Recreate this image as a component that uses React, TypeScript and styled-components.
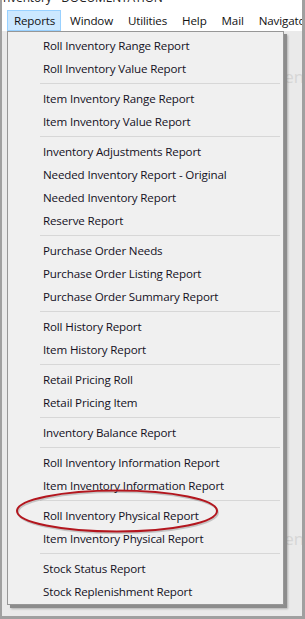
import styled, { createGlobalStyle } from "styled-components";

const GlobalStyle = createGlobalStyle`
  html, body {
    margin: 0;
    padding: 0;
    background: #ffffff;
  }
  body {
    font-family: "Segoe UI", "Open Sans", "Liberation Sans", sans-serif;
    font-size: 11.6px;
    letter-spacing: -0.15px;
    color: #111;
  }
`;

const Frame = styled.div`
  width: 305px;
  height: 619px;
  box-sizing: border-box;
  border: 3px solid #a0a0a0;
  border-top: none;
  border-left-width: 2px;
  display: flex;
  flex-direction: column;
  overflow: hidden;
  background: #ffffff;
`;

const TitleStrip = styled.div`
  height: 10px;
  overflow: hidden;
  white-space: nowrap;
  span {
    display: block;
    margin: -10px 0 0 0;
    padding-left: 1px;
    line-height: 16px;
    font-size: 12px;
    color: #222;
  }
`;

const MenuBar = styled.div`
  height: 21px;
  display: flex;
  align-items: stretch;
  padding-left: 5px;
  background: #ffffff;
  white-space: nowrap;
`;

const MenuTitle = styled.div<{ $open?: boolean }>`
  display: flex;
  align-items: center;
  padding: 0 5px 0 6px;
  margin-right: 2px;
  border: 1px solid ${(p) => (p.$open ? "#99d1ff" : "transparent")};
  background: ${(p) => (p.$open ? "#cce8ff" : "transparent")};
  color: #111;
`;

const Desk = styled.div`
  flex: 1;
  position: relative;
  background: #eaeaea;
  padding: 0 0 0 5px;
`;

const Watermark = styled.span<{ $top: number }>`
  position: absolute;
  right: -2px;
  top: ${(p) => p.$top}px;
  font-size: 17px;
  color: #d6d6d6;
`;

const Dropdown = styled.div`
  position: relative;
  width: 277px;
  box-sizing: border-box;
  background: #f0f0f0;
  border: 1px solid #979797;
  padding: 2px 2px 1px 2px;
  box-shadow: 3px 3px 0 #8c8c8c, 4px 4px 2px rgba(0, 0, 0, 0.25);
`;

const Item = styled.div`
  height: 23px;
  line-height: 23px;
  padding-left: 33px;
  white-space: nowrap;
  color: #14101e;
`;

const Separator = styled.div`
  height: 1px;
  margin: 3px 1px 3px 30px;
  background: #d7d7d7;
`;

const Highlight = styled.svg`
  position: absolute;
  left: 8px;
  top: 457px;
  overflow: visible;
`;

const groups: string[][] = [
  ["Roll Inventory Range Report", "Roll Inventory Value Report"],
  ["Item Inventory Range Report", "Item Inventory Value Report"],
  [
    "Inventory Adjustments Report",
    "Needed Inventory Report - Original",
    "Needed Inventory Report",
    "Reserve Report",
  ],
  [
    "Purchase Order Needs",
    "Purchase Order Listing Report",
    "Purchase Order Summary Report",
  ],
  ["Roll History Report", "Item History Report"],
  ["Retail Pricing Roll", "Retail Pricing Item"],
  ["Inventory Balance Report"],
  ["Roll Inventory Information Report", "Item Inventory Information Report"],
  ["Roll Inventory Physical Report", "Item Inventory Physical Report"],
  ["Stock Status Report", "Stock Replenishment Report"],
];

const menus = ["Reports", "Window", "Utilities", "Help", "Mail", "Navigator"];

export default function App() {
  return (
    <>
      <GlobalStyle />
      <Frame>
        <TitleStrip>
          <span>nventory - DOCUMENTATION</span>
        </TitleStrip>
        <MenuBar>
          {menus.map((m, i) => (
            <MenuTitle key={m} $open={i === 0}>
              {m}
            </MenuTitle>
          ))}
        </MenuBar>
        <Desk>
          <Watermark $top={34}>en</Watermark>
          <Watermark $top={496}>en</Watermark>
          <Dropdown>
            {groups.map((g, gi) => (
              <div key={gi}>
                {gi > 0 && <Separator />}
                {g.map((label) => (
                  <Item key={label}>{label}</Item>
                ))}
              </div>
            ))}
            <Highlight width="204" height="45" viewBox="0 0 204 45">
              <ellipse
                cx="102"
                cy="23.5"
                rx="100"
                ry="20.5"
                fill="none"
                stroke="rgba(0,0,0,0.18)"
                strokeWidth="2"
              />
              <ellipse
                cx="101"
                cy="22"
                rx="100"
                ry="20.5"
                fill="none"
                stroke="#b3161e"
                strokeWidth="2"
              />
            </Highlight>
          </Dropdown>
        </Desk>
      </Frame>
    </>
  );
}
